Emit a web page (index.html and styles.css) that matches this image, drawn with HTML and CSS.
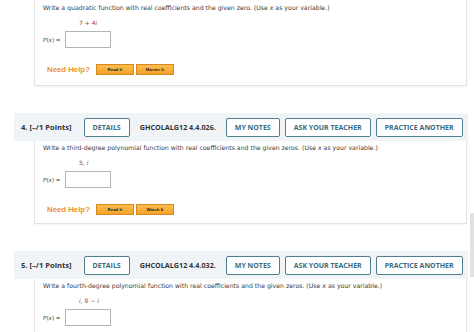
FILE: index.html
```html
<!DOCTYPE html>
<html lang="en">
<head>
    <meta charset="UTF-8">
    <title>Assignment</title>
    <link rel="stylesheet" href="styles.css">
</head>
<body>
    <div class="page">
        <section class="question first">
            <div class="q-body">
                <p class="prompt">Write a quadratic function with real coefficients and the given zero. (Use <i>x</i> as your variable.)</p>
                <p class="zeros">7 + 4<i>i</i></p>
                <div class="answer">
                    <span class="label"><i>P</i>(<i>x</i>) =</span>
                    <input type="text" class="answer-box">
                </div>
                <div class="help">
                    <span class="help-title">Need Help?</span>
                    <button class="help-btn">Read It</button>
                    <button class="help-btn">Master It</button>
                </div>
            </div>
        </section>

        <section class="question">
            <div class="q-head">
                <span class="q-num">4. [–/1 Points]</span>
                <button class="q-btn">DETAILS</button>
                <span class="q-code">GHCOLALG12 4.4.026.</span>
                <div class="q-actions">
                    <button class="q-btn">MY NOTES</button>
                    <button class="q-btn">ASK YOUR TEACHER</button>
                    <button class="q-btn">PRACTICE ANOTHER</button>
                </div>
            </div>
            <div class="q-body">
                <p class="prompt">Write a third-degree polynomial function with real coefficients and the given zeros. (Use <i>x</i> as your variable.)</p>
                <p class="zeros">5, <i>i</i></p>
                <div class="answer">
                    <span class="label"><i>P</i>(<i>x</i>) =</span>
                    <input type="text" class="answer-box">
                </div>
                <div class="help">
                    <span class="help-title">Need Help?</span>
                    <button class="help-btn">Read It</button>
                    <button class="help-btn">Watch It</button>
                </div>
            </div>
        </section>

        <section class="question">
            <div class="q-head">
                <span class="q-num">5. [–/1 Points]</span>
                <button class="q-btn">DETAILS</button>
                <span class="q-code">GHCOLALG12 4.4.032.</span>
                <div class="q-actions">
                    <button class="q-btn">MY NOTES</button>
                    <button class="q-btn">ASK YOUR TEACHER</button>
                    <button class="q-btn">PRACTICE ANOTHER</button>
                </div>
            </div>
            <div class="q-body">
                <p class="prompt">Write a fourth-degree polynomial function with real coefficients and the given zeros. (Use <i>x</i> as your variable.)</p>
                <p class="zeros"><i>i</i>, <span class="num">8</span> − <i>i</i></p>
                <div class="answer">
                    <span class="label"><i>P</i>(<i>x</i>) =</span>
                    <input type="text" class="answer-box">
                </div>
            </div>
        </section>
    </div>

    <div class="side-strip"></div>
</body>
</html>
```

FILE: styles.css
```css
* {
    margin: 0;
    padding: 0;
    box-sizing: border-box;
}

body {
    background: #ffffff;
    font-family: 'DejaVu Sans', Verdana, sans-serif;
    color: #3a3a3a;
    overflow: hidden;
}

.page {
    padding: 0 6px 0 14px;
}

.question {
    margin-top: 27px;
}

.question.first {
    margin-top: 0;
}

/* header band */
.q-head {
    display: flex;
    align-items: center;
    height: 28px;
    padding-left: 7px;
    background: #f1f4f6;
    font-family: 'Open Sans', sans-serif;
    font-weight: 700;
}

.q-num {
    font-size: 7.6px;
    color: #333;
    margin-right: 12px;
}

.q-code {
    font-size: 7.2px;
    color: #333;
    margin: 0 10px;
}

.q-btn {
    height: 19px;
    padding: 0 8px;
    background: #fff;
    border: 1.5px solid #4f7f90;
    border-radius: 2px;
    color: #3a6a7e;
    font-family: 'Open Sans', sans-serif;
    font-weight: 700;
    font-size: 7px;
}

.q-actions {
    display: flex;
    gap: 5px;
}

/* question body */
.q-body {
    margin-left: 20px;
    margin-right: 1px;
    border: 1px solid #e3e3e3;
    border-top: none;
    padding: 2px 8px 8px;
    box-shadow: 0 1px 2px rgba(0,0,0,0.05);
}

.first .q-body {
    padding-top: 3px;
    padding-bottom: 10px;
}

.prompt {
    font-size: 6.2px;
    line-height: 10px;
}

.zeros {
    margin-top: 5px;
    margin-left: 36px;
    font-size: 6px;
    line-height: 10px;
    color: #9b3b3b;
}

.zeros .num {
    color: #d0402f;
}

.answer {
    display: flex;
    align-items: center;
    gap: 4px;
    margin-top: 3px;
}

.label {
    font-size: 5.6px;
    width: 18px;
}

.answer-box {
    width: 46px;
    height: 17px;
    border: 1px solid #b5b5b5;
    background: #fff;
}

.help {
    display: flex;
    align-items: center;
    gap: 2px;
    margin-top: 16px;
    padding-left: 4px;
    height: 11px;
}

.help-title {
    font-family: 'Liberation Sans', Arial, sans-serif;
    font-weight: 700;
    font-size: 7.8px;
    color: #e8932f;
    margin-right: 4px;
}

.help-btn {
    width: 38px;
    height: 11px;
    background: linear-gradient(#fbbd4f, #f4a22a);
    border: 1px solid #d7891f;
    font-family: 'Liberation Sans', Arial, sans-serif;
    font-weight: 700;
    font-size: 4.4px;
    color: #222;
}

.side-strip {
    position: absolute;
    right: 0;
    top: 213px;
    width: 4px;
    height: 64px;
    background: #e2e2e2;
}
```
